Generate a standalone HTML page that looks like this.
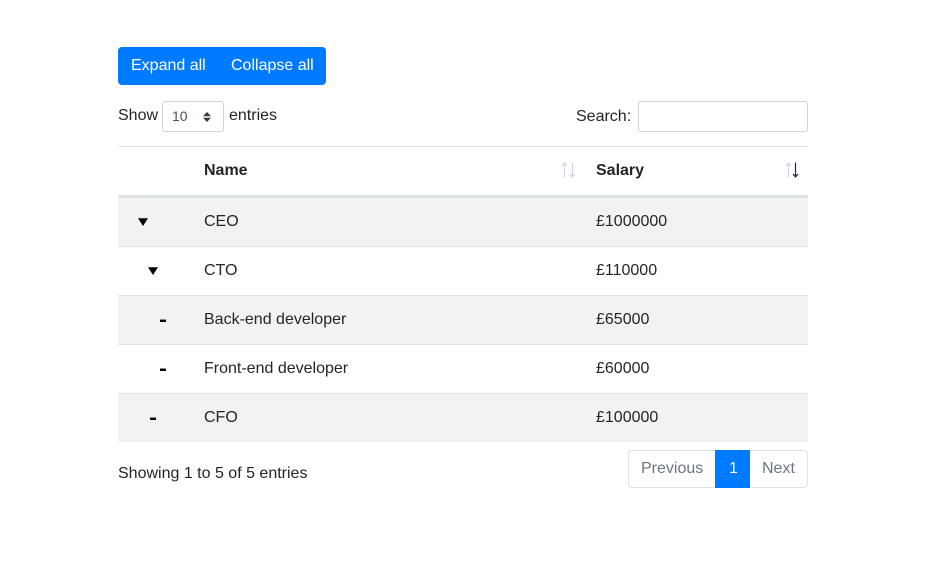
<!DOCTYPE html>
<html><head><meta charset="utf-8">
<style>
html,body{margin:0;padding:0;background:#fff;}
body{width:929px;height:573px;position:relative;overflow:hidden;font-family:"Liberation Sans",sans-serif;font-size:16px;line-height:24px;color:#212529;}
.a{position:absolute;white-space:nowrap;}
.bar{position:absolute;left:118px;width:690px;}
.tri{position:absolute;}
.dash{position:absolute;width:6px;height:2px;background:#000;border-top:1px solid #888;}
</style></head><body>
<div class="a" style="left:118px;top:47px;width:208px;height:38px;background:#007bff;border-radius:4px;"></div>
<div class="a" style="left:131px;top:54px;color:#fff;">Expand all</div>
<div class="a" style="left:231px;top:54px;color:#fff;">Collapse all</div>

<div class="a" style="left:118px;top:104px;">Show</div>
<div class="a" style="left:162px;top:101px;width:60px;height:29px;border:1px solid #ced4da;border-radius:3px;"></div>
<div class="a" style="left:172px;top:104px;font-size:14px;color:#495057;">10</div>
<svg class="a" style="left:203px;top:112px;" width="8" height="10" viewBox="0 0 8 10"><path d="M4 0 L8 4.200 H0 Z M0 5.800 H8 L4 10 Z" fill="#343a40"/></svg>
<div class="a" style="left:229px;top:104px;">entries</div>

<div class="a" style="left:576px;top:105px;">Search:</div>
<div class="a" style="left:638px;top:101px;width:168px;height:29px;border:1px solid #ced4da;border-radius:3px;"></div>

<div class="bar" style="top:146px;height:1px;background:#dee2e6;"></div>
<div class="bar" style="top:195px;height:3px;background:#dee2e6;"></div>
<div class="a" style="left:204px;top:159px;font-weight:bold;">Name</div>
<div class="a" style="left:596px;top:159px;font-weight:bold;">Salary</div>
<svg class="a" style="left:560px;top:162px;" width="17" height="16" viewBox="0 0 17 16" fill="none" stroke="#7f8fc0" stroke-opacity=".38" stroke-width="1.1"><path d="M4.500 15.500V1M2 4L4.500 1L7 4"/><path d="M12.500 0.500V15M10 12L12.500 15L15 12"/></svg>
<svg class="a" style="left:784px;top:162px;" width="17" height="16" viewBox="0 0 17 16" fill="none" stroke-width="1.1"><path stroke="#7f8fc0" stroke-opacity=".38" d="M4.500 15.500V1M2 4L4.500 1L7 4"/><path stroke="#1b2a5c" stroke-width="1.2" d="M11.500 0.500V15M9 12L11.500 15L14 12"/></svg>

<div class="bar" style="top:198px;height:48px;background:#f2f2f2;"></div>
<div class="bar" style="top:246px;height:1px;background:#dee2e6;"></div>
<div class="bar" style="top:295px;height:1px;background:#dee2e6;"></div>
<div class="bar" style="top:296px;height:48px;background:#f2f2f2;"></div>
<div class="bar" style="top:344px;height:1px;background:#dee2e6;"></div>
<div class="bar" style="top:393px;height:1px;background:#dee2e6;"></div>
<div class="bar" style="top:394px;height:48px;background:#f2f2f2;"></div>

<svg class="tri" style="left:138px;top:218px;" width="10" height="8" viewBox="0 0 10 8"><path d="M0 0.300H10L5 8Z" fill="#000"/></svg>
<svg class="tri" style="left:148px;top:267px;" width="10" height="8" viewBox="0 0 10 8"><path d="M0 0.300H10L5 8Z" fill="#000"/></svg>
<div class="dash" style="left:160px;top:319px;"></div>
<div class="dash" style="left:160px;top:368px;"></div>
<div class="dash" style="left:150px;top:417px;"></div>

<div class="a" style="left:204px;top:210px;">CEO</div>
<div class="a" style="left:596px;top:210px;">£1000000</div>
<div class="a" style="left:204px;top:259px;">CTO</div>
<div class="a" style="left:596px;top:259px;">£110000</div>
<div class="a" style="left:204px;top:308px;">Back-end developer</div>
<div class="a" style="left:596px;top:308px;">£65000</div>
<div class="a" style="left:204px;top:357px;">Front-end developer</div>
<div class="a" style="left:596px;top:357px;">£60000</div>
<div class="a" style="left:204px;top:406px;">CFO</div>
<div class="a" style="left:596px;top:406px;">£100000</div>

<div class="a" style="left:118px;top:462px;">Showing 1 to 5 of 5 entries</div>
<div class="a" style="left:628px;top:450px;width:178px;height:36px;border:1px solid #dee2e6;border-radius:4px;"></div>
<div class="a" style="left:641px;top:457px;color:#6c757d;">Previous</div>
<div class="a" style="left:715px;top:450px;width:35px;height:38px;background:#007bff;"></div>
<div class="a" style="left:729px;top:457px;color:#fff;">1</div>
<div class="a" style="left:762px;top:457px;color:#6c757d;">Next</div>
</body></html>
